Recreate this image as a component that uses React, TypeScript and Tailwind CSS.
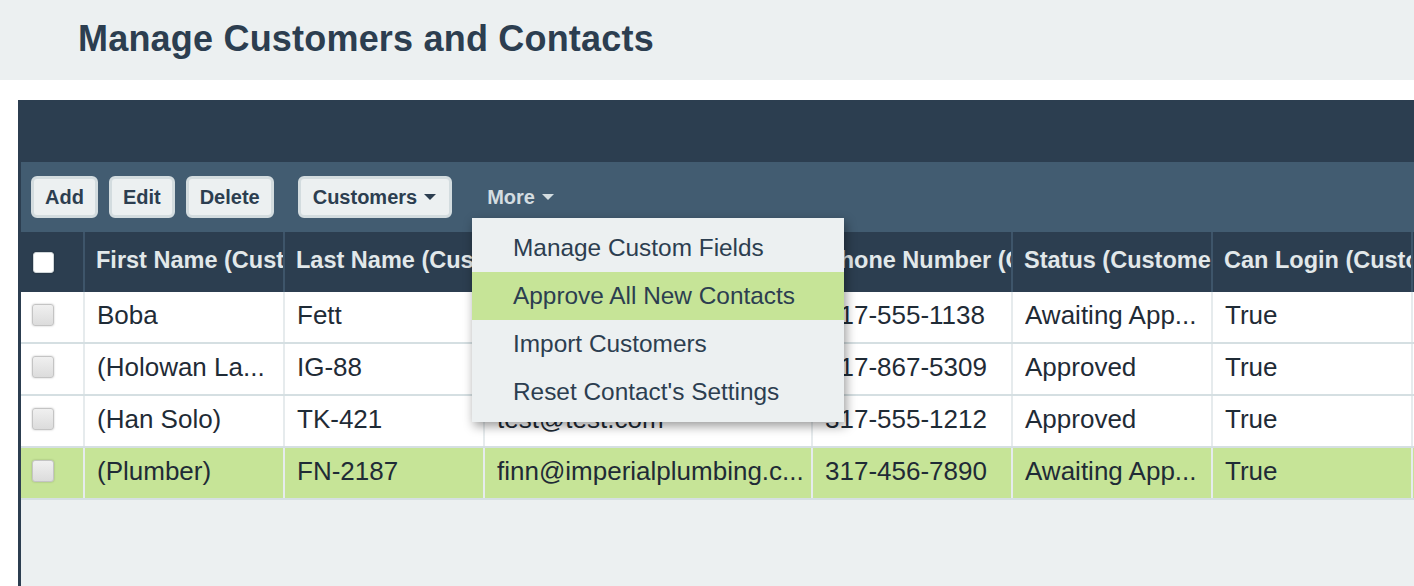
import React from 'react';

type Row = {
    first: string;
    last: string;
    email: string;
    phone: string;
    status: string;
    login: string;
    selected?: boolean;
};

const rows: Row[] = [
    { first: 'Boba', last: 'Fett', email: 'boba@fett.com', phone: '317-555-1138', status: 'Awaiting App...', login: 'True' },
    { first: '(Holowan La...', last: 'IG-88', email: 'ig88@holowan.com', phone: '317-867-5309', status: 'Approved', login: 'True' },
    { first: '(Han Solo)', last: 'TK-421', email: 'test@test.com', phone: '317-555-1212', status: 'Approved', login: 'True' },
    { first: '(Plumber)', last: 'FN-2187', email: 'finn@imperialplumbing.c...', phone: '317-456-7890', status: 'Awaiting App...', login: 'True', selected: true },
];

const columns = [
    'First Name (Customer)',
    'Last Name (Customer)',
    'Email (Customer)',
    'Phone Number (Customer)',
    'Status (Customer)',
    'Can Login (Customer)',
];

const menuItems = [
    'Manage Custom Fields',
    'Approve All New Contacts',
    'Import Customers',
    "Reset Contact's Settings",
];

const gridCols = 'grid grid-cols-[64px_200px_200px_328px_200px_200px_200px]';

const Caret = ({ color }: { color: string }) => (
    <svg width="12" height="6" viewBox="0 0 12 6" className="ml-[7px]">
        <path d="M0 0 L12 0 L6 6 Z" fill={color} />
    </svg>
);

const ToolButton = ({ label, caret }: { label: string; caret?: boolean }) => (
    <button
        className={`flex items-center h-[42px] rounded-[6px] border-[3px] border-[#d3dcdf] bg-[#ecf0f1] text-[20px] font-bold text-[#2c3e50] ${caret ? 'pl-[12px] pr-[13px]' : 'px-[11px]'}`}
    >
        {label}
        {caret && <Caret color="#2c3e50" />}
    </button>
);

const Checkbox = ({ header }: { header?: boolean }) => (
    <div
        className={
            header
                ? 'w-[21px] h-[21px] rounded-[3px] bg-white border border-[#cfd6d9] shadow-[0_0_2px_rgba(0,0,0,0.35)]'
                : 'w-[22px] h-[22px] rounded-[3px] bg-gradient-to-b from-[#f0f0f0] to-[#dcdcdc] border border-[#c4c4c4] shadow-[0_0_2px_rgba(0,0,0,0.25)]'
        }
    />
);

export default function App() {
    return (
        <div className="w-[1414px] h-[586px] overflow-hidden bg-white font-['Liberation_Sans',Arial,sans-serif]">
            {/* Page header */}
            <div className="h-[80px] bg-[#ecf0f1] flex items-center pl-[78px] pb-[2px]">
                <h1 className="text-[36px] tracking-[0.2px] font-bold text-[#2c3e50]">Manage Customers and Contacts</h1>
            </div>

            <div className="pt-[20px] pl-[18px]">
                <div className="relative h-[486px] border-l-[3px] border-[#2c3e50] bg-[#ecf0f1] flex flex-col">
                    <div className="h-[62px] bg-[#2c3e50]" />

                    {/* Toolbar */}
                    <div className="h-[70px] bg-[#425c71] flex items-center pl-[10px]">
                        <div className="flex gap-[11px]">
                            <ToolButton label="Add" />
                            <ToolButton label="Edit" />
                            <ToolButton label="Delete" />
                        </div>
                        <div className="ml-[24px]">
                            <ToolButton label="Customers" caret />
                        </div>
                        <div className="ml-[35px] flex items-center text-[20px] font-bold text-[#d4dde1]">
                            More
                            <Caret color="#d4dde1" />
                        </div>
                    </div>

                    {/* Column headers */}
                    <div className={`${gridCols} h-[60px] bg-[#2c3e50]`}>
                        <div className="flex items-center pl-[12px] border-r-2 border-[#3e556a]">
                            <Checkbox header />
                        </div>
                        {columns.map(col => (
                            <div
                                key={col}
                                className="flex items-center pl-[11px] pb-[2px] border-r-2 border-[#3e556a] overflow-hidden whitespace-nowrap text-[23.5px] font-bold text-[#e2e8ea]"
                            >
                                {col}
                            </div>
                        ))}
                    </div>

                    {/* Rows */}
                    {rows.map(row => (
                        <div
                            key={row.last}
                            className={`${gridCols} h-[52px] border-b-2 border-[#d5dfe2] ${row.selected ? 'bg-[#c6e497]' : 'bg-white'}`}
                        >
                            <div className="flex items-center pl-[11px] pb-[4px] border-r-2 border-[#e6ebed]">
                                <Checkbox />
                            </div>
                            {[row.first, row.last, row.email, row.phone, row.status, row.login].map((value, i) => (
                                <div
                                    key={i}
                                    className="flex items-center px-3 pb-[4px] border-r-2 border-[#e6ebed] overflow-hidden whitespace-nowrap text-[26px] text-[#1f2b36]"
                                >
                                    {value}
                                </div>
                            ))}
                        </div>
                    ))}

                    {/* More dropdown */}
                    <div className="absolute left-[451px] top-[118px] w-[372px] py-[6px] bg-[#ecf0f1] shadow-[2px_4px_10px_rgba(0,0,0,0.4)]">
                        {menuItems.map((item, i) => (
                            <div
                                key={item}
                                className={`h-[48px] flex items-center pl-[41px] text-[24.4px] text-[#2c3e50] ${i === 1 ? 'bg-[#c6e497]' : ''}`}
                            >
                                {item}
                            </div>
                        ))}
                    </div>
                </div>
            </div>
        </div>
    );
}
